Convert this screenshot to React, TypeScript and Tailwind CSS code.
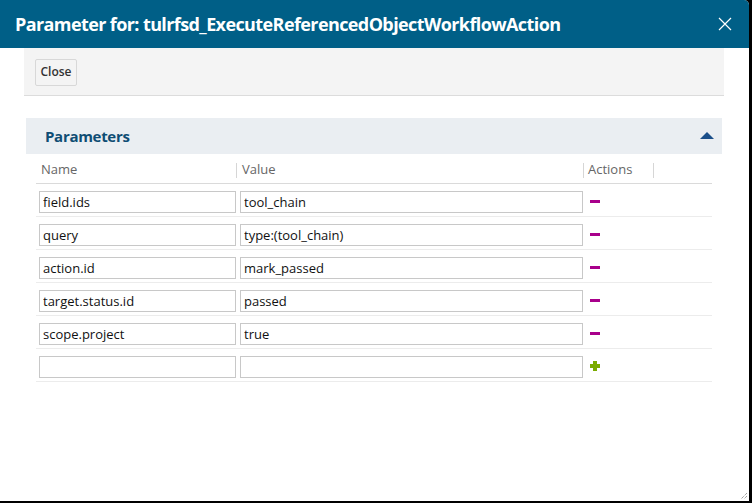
import React from 'react';

const rows = [
  { name: 'field.ids', value: 'tool_chain' },
  { name: 'query', value: 'type:(tool_chain)' },
  { name: 'action.id', value: 'mark_passed' },
  { name: 'target.status.id', value: 'passed' },
  { name: 'scope.project', value: 'true' },
];

function MinusIcon() {
  return <span className="block w-[10px] h-[3px] bg-[#a8008b]" />;
}

function PlusIcon() {
  return (
    <svg width="10" height="10" viewBox="0 0 10 10" className="block">
      <rect x="3" y="0" width="4" height="10" fill="#7aab00" />
      <rect x="0" y="3" width="10" height="4" fill="#7aab00" />
    </svg>
  );
}

function ParamRow({ name, value, last }: { name: string; value: string; last?: boolean }) {
  return (
    <div className="flex h-[33px] border-b border-[#ececec]">
      <div className="w-[200px] pl-[3px] pt-[5px]">
        <input
          readOnly
          value={name}
          className="w-[197px] h-[22px] border border-[#c8c8c8] px-[3px] text-[13px] text-[#111] outline-none"
        />
      </div>
      <div className="w-[347px] pl-[4px] pt-[5px]">
        <input
          readOnly
          value={value}
          className="w-[343px] h-[22px] border border-[#c8c8c8] px-[3px] text-[13px] text-[#111] outline-none"
        />
      </div>
      <div className="flex items-center pl-[7px] pt-[2px]">{last ? <PlusIcon /> : <MinusIcon />}</div>
    </div>
  );
}

export default function App() {
  return (
    <div className="w-[752px] h-[503px] bg-black overflow-hidden" style={{ fontFamily: '"Open Sans", "Noto Sans", sans-serif' }}>
      <div className="relative w-[749px] h-[501px] bg-white rounded-tr-[5px] overflow-hidden flex flex-col">
        <div className="h-[48px] shrink-0 bg-[#005f87] flex items-center justify-between pl-[15px] pr-[17px]">
          <h1 className="text-white text-[18px] font-bold tracking-[-0.6px]">
            Parameter for: tulrfsd_ExecuteReferencedObjectWorkflowAction
          </h1>
          <svg width="14" height="14" viewBox="0 0 14 14" className="block">
            <path d="M1 1 L13 13 M13 1 L1 13" stroke="#fff" strokeWidth="1.2" />
          </svg>
        </div>

        <div className="pl-[24px] pr-[25px]">
          <div className="h-[48px] bg-[#f4f4f4] border-b border-[#dcdcdc] pl-[11px] pt-[10px]">
            <button className="h-[27px] w-[42px] border border-[#d8d8d8] bg-[#f4f4f4] rounded-[2px] text-[12px] font-semibold text-[#333]">
              Close
            </button>
          </div>

          <div className="mt-[22px] ml-[2px] w-[696px]">
            <div className="h-[36px] bg-[#eaeef2] flex items-center justify-between pl-[19px] pr-[8px]">
              <span className="text-[15px] font-bold text-[#0f4d74] tracking-[-0.3px]">Parameters</span>
              <svg width="14" height="8" viewBox="0 0 14 8" className="block">
                <path d="M7 0 L14 7 L0 7 Z" fill="#1b4f8a" />
              </svg>
            </div>

            <div className="ml-[10px] w-[676px]">
              <div className="flex h-[30px] border-b border-[#dadada] text-[13px] text-[#666] items-center pt-[3px]">
                <div className="w-[200px] pl-[5px]">Name</div>
                <div className="w-[347px] pl-[5px] border-l border-[#d6d6d6] h-[15px] flex items-center">Value</div>
                <div className="w-[71px] pl-[4px] border-l border-[#d6d6d6] border-r h-[15px] flex items-center">Actions</div>
              </div>
              {rows.map((r) => (
                <ParamRow key={r.name} name={r.name} value={r.value} />
              ))}
              <ParamRow name="" value="" last />
            </div>
          </div>
        </div>

        <svg width="8" height="8" viewBox="0 0 8 8" className="absolute right-[1px] bottom-[1px]">
          <path d="M7 1 L1 7 M7 4 L4 7" stroke="#777" strokeWidth="1" strokeDasharray="1 1" />
        </svg>
      </div>
    </div>
  );
}
